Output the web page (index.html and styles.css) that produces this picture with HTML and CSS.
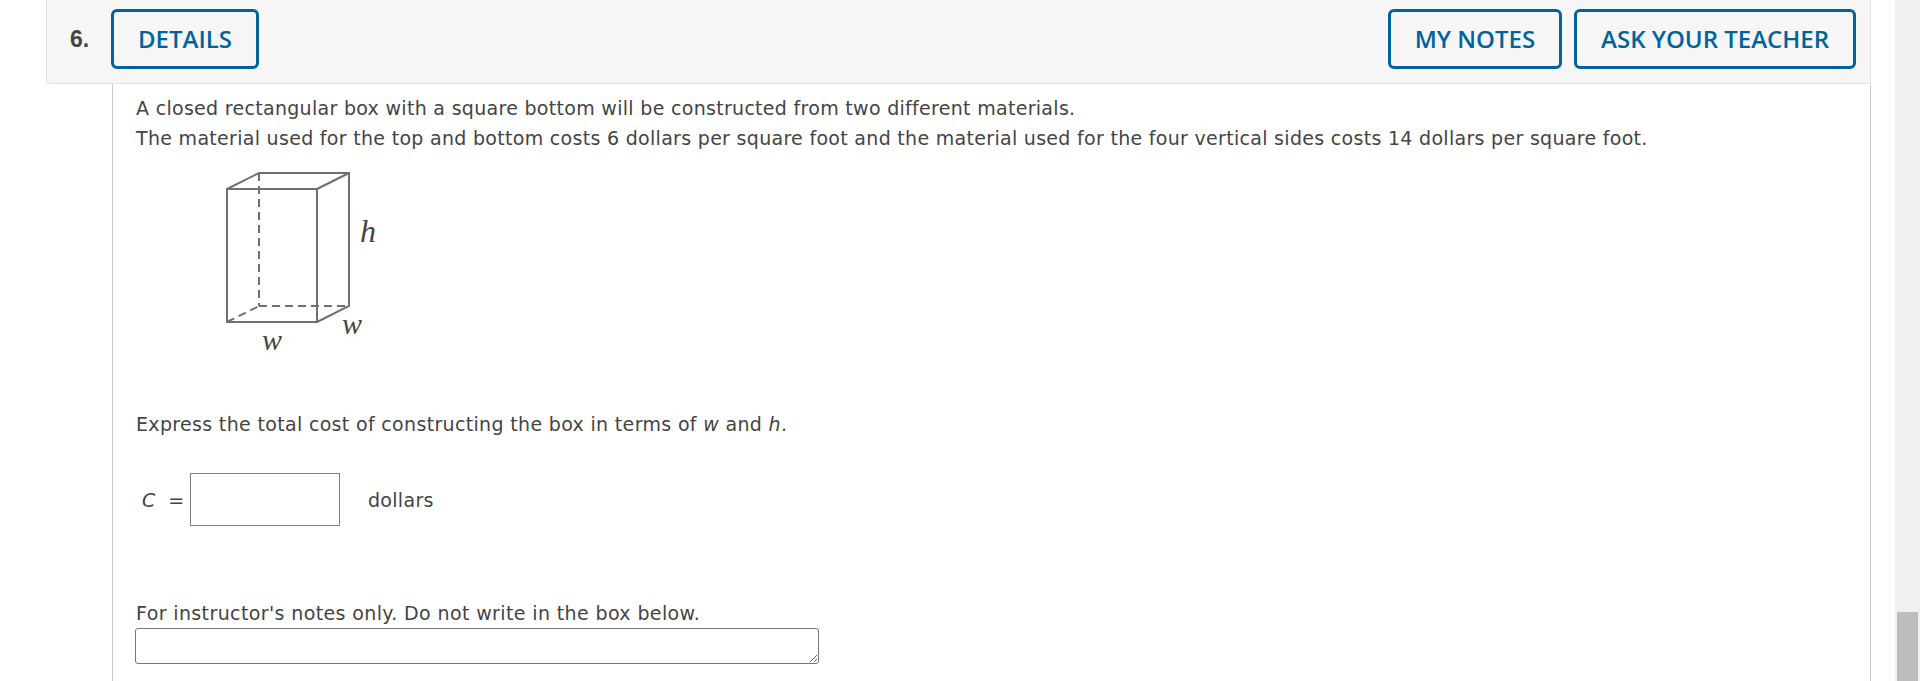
FILE: index.html
```html
<!DOCTYPE html>
<html lang="en">
<head>
<meta charset="utf-8">
<title>Question 6</title>
<link rel="stylesheet" href="styles.css">
</head>
<body>
<div class="page">
  <main class="main">
    <header class="qhead">
      <span class="qnum">6.</span>
      <button class="btn">DETAILS</button>
      <div class="spacer"></div>
      <button class="btn">MY NOTES</button>
      <button class="btn">ASK YOUR TEACHER</button>
    </header>
    <section class="qbody">
      <p class="line">A closed rectangular box with a square bottom will be constructed from two different materials.</p>
      <p class="line">The material used for the top and bottom costs 6 dollars per square foot and the material used for the four vertical sides costs 14 dollars per square foot.</p>
      <svg class="figure" width="160" height="200" viewBox="0 0 160 200">
        <g class="soft" fill="none" stroke="#707070" stroke-width="2">
          <rect x="2" y="17" width="90" height="133"/>
          <path d="M2 17L34 1H124V134L92 150M92 17L124 1"/>
          <path d="M34 1V134M34 134H124M2 150L34 134" stroke-dasharray="8 5"/>
        </g>
        <text class="mvar" x="37" y="178">w</text>
        <text class="mvar" x="117" y="162">w</text>
        <text class="mvar mvar-h" x="135" y="70">h</text>
      </svg>
      <p class="line express">Express the total cost of constructing the box in terms of <i>w</i> and <i>h</i>.</p>
      <div class="answer">
        <span class="eq"><i>C</i>&nbsp; =</span>
        <input class="ans" type="text">
        <span class="unit">dollars</span>
      </div>
      <p class="line notes">For instructor's notes only. Do not write in the box below.</p>
      <textarea class="note"></textarea>
    </section>
  </main>
  <aside class="scroll"><div class="thumb"></div></aside>
</div>
</body>
</html>
```
FILE: styles.css
```css
* { box-sizing: border-box; }
html, body { margin: 0; height: 100%; overflow: hidden; background: #fff; }
.page { display: flex; height: 681px; overflow: hidden; }
.main { width: 1871px; padding-left: 46px; display: flex; flex-direction: column; }
.qhead {
  height: 84px; display: flex; align-items: flex-start; padding: 9px 14px 0 0;
  background: #f6f6f6; border: 1px solid #e2e2e2; border-top: 0; border-radius: 0 0 3px 3px;
}
.qnum {
  width: 64px; padding: 16px 0 0 23px; font: bold 23px/28px "Liberation Sans", sans-serif; color: #444;
}
.btn {
  height: 60px; padding: 0 24px; margin-left: 12px; background: #f6f6f6;
  border: 3px solid #00639c; border-radius: 6px; color: #00639c;
  font: 600 24px/30px "Open Sans", sans-serif; white-space: nowrap;
}
.qnum + .btn { margin-left: 0; }
.spacer { flex: 1; }
.qbody {
  flex: 1; margin-left: 66px; padding: 9px 0 0 23px;
  border-left: 1px solid #ccc; border-right: 1px solid #ccc;
  font: 19px/30px "DejaVu Sans", Verdana, sans-serif; letter-spacing: .3px; color: #444;
}
.line { margin: 0; }
.figure { display: block; margin: 19px 0 0 89px; }
.soft { filter: blur(.6px); }
.mvar { font: italic 30px "Liberation Serif", serif; letter-spacing: 0; fill: #444; }
.mvar-h { font-size: 32px; }
.express { margin-top: 37px; letter-spacing: .33px; }
.answer { display: flex; align-items: center; margin-top: 34px; height: 53px; }
.eq { width: 54px; padding-left: 6px; }
.ans { width: 150px; height: 53px; border: 1px solid #808080; background: #fff; }
.unit { margin-left: 28px; }
.notes { margin-top: 72px; letter-spacing: .38px; }
.note { display: block; width: 684px; height: 36px; margin: 0 0 0 -1px; border: 1px solid #767676; border-radius: 3px; }
.scroll { width: 25px; margin-left: 24px; background: #f0f0f0; padding: 612px 2px 0; }
.thumb { height: 69px; background: #bdbdbd; }
```
